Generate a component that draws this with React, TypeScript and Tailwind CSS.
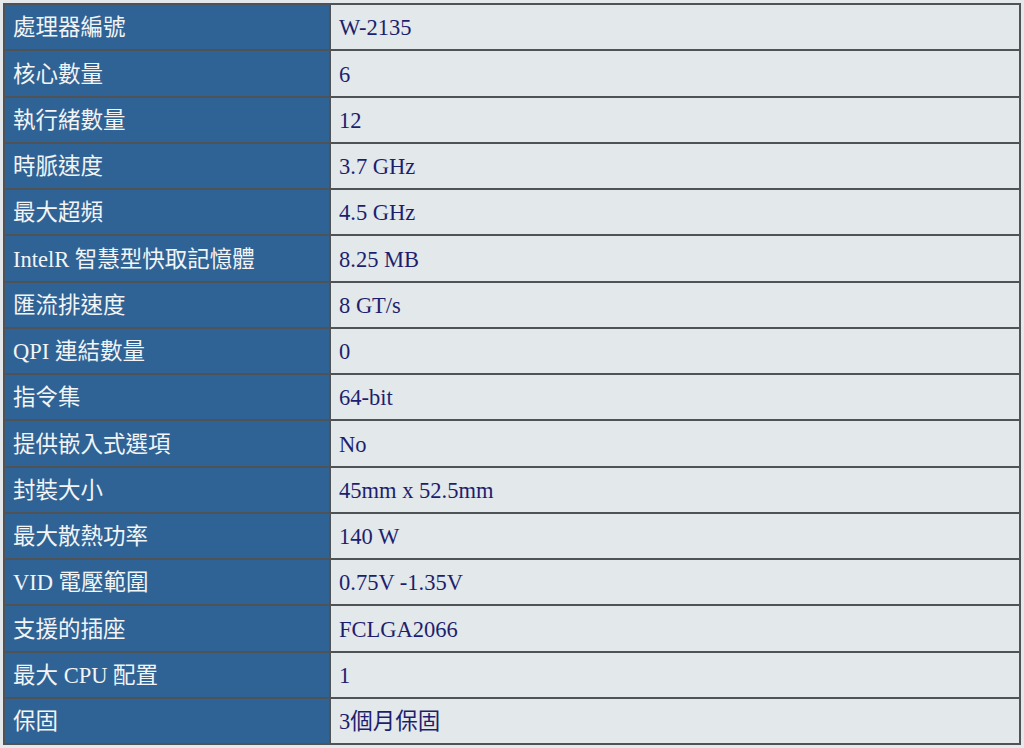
const rows: [string, string][] = [
  ['處理器編號', 'W-2135'],
  ['核心數量', '6'],
  ['執行緒數量', '12'],
  ['時脈速度', '3.7 GHz'],
  ['最大超頻', '4.5 GHz'],
  ['IntelR 智慧型快取記憶體', '8.25 MB'],
  ['匯流排速度', '8 GT/s'],
  ['QPI 連結數量', '0'],
  ['指令集', '64-bit'],
  ['提供嵌入式選項', 'No'],
  ['封裝大小', '45mm x 52.5mm'],
  ['最大散熱功率', '140 W'],
  ['VID 電壓範圍', '0.75V -1.35V'],
  ['支援的插座', 'FCLGA2066'],
  ['最大 CPU 配置', '1'],
  ['保固', '3個月保固'],
];

export default function App() {
  return (
    <div
      className="w-[1024px] h-[748px] bg-[#e5e9ec] p-[3px]"
      style={{ fontFamily: '"Liberation Serif", "Noto Sans CJK TC", serif' }}
    >
      <div className="flex flex-col h-[742px] w-[1018px] border-2 border-[#505355]">
        {rows.map(([label, value], i) => (
          <div
            key={label}
            className={`flex flex-1 ${i < rows.length - 1 ? 'border-b-2 border-[#505355]' : ''}`}
          >
            <div className="w-[326px] flex items-center pl-2 pt-[2px] bg-[#2f6395] text-[#f2f4f6] text-[22.5px] border-r-2 border-[#505355]">
              {label}
            </div>
            <div className="flex-1 flex items-center pl-2 pt-[2px] bg-[#e3e8eb] text-[#1d1f6e] text-[22.5px]">
              {value}
            </div>
          </div>
        ))}
      </div>
    </div>
  );
}
